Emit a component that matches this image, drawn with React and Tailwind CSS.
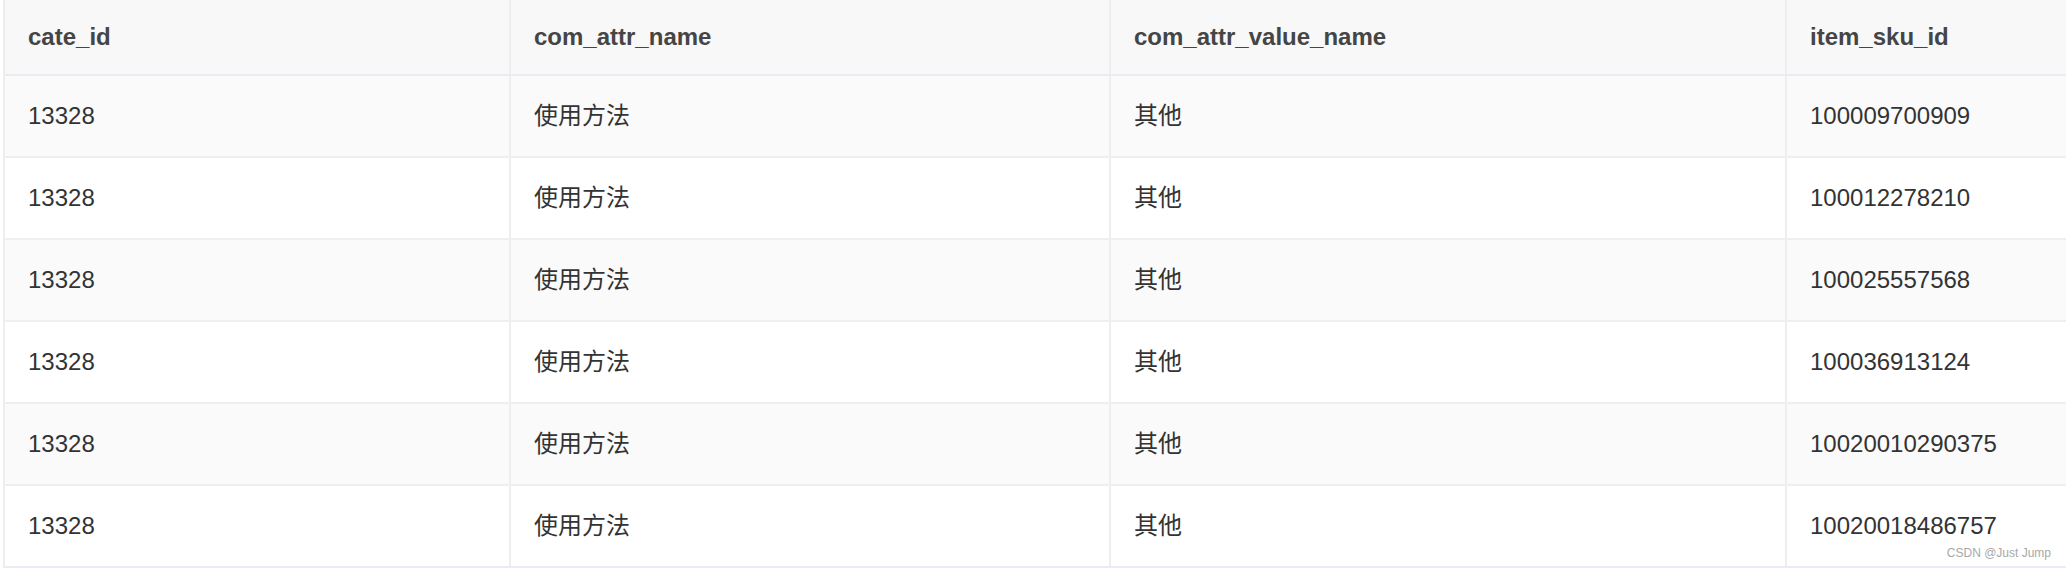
import React from 'react'

const columns = ['cate_id', 'com_attr_name', 'com_attr_value_name', 'item_sku_id']

const rows = [
  ['13328', '使用方法', '其他', '100009700909'],
  ['13328', '使用方法', '其他', '100012278210'],
  ['13328', '使用方法', '其他', '100025557568'],
  ['13328', '使用方法', '其他', '100036913124'],
  ['13328', '使用方法', '其他', '10020010290375'],
  ['13328', '使用方法', '其他', '10020018486757'],
]

const widths = ['w-[504px]', 'w-[600px] border-l-2 border-[#eeeeee]', 'w-[676px] border-l-2 border-[#eeeeee]', 'flex-1 border-l-2 border-[#eeeeee]']

const font = { fontFamily: '"Liberation Sans", "Noto Sans CJK SC", sans-serif' }

const App = () => {
  return (
    <div className="relative w-[2066px] h-[570px] overflow-hidden bg-white" style={font}>
      <div className="ml-[3px] w-[2300px] border-l-2 border-[#eeeeee]">
        <div className="flex h-[76px] bg-[#f8f8f8] border-b-2 border-[#e8ecf3]">
          {columns.map((c, i) => (
            <div key={c} className={`${widths[i]} flex items-center pl-[23px] text-[24px] font-bold text-[#454545]`}>
              {c}
            </div>
          ))}
        </div>
        {rows.map((r, ri) => (
          <div
            key={ri}
            className={`flex h-[82px] border-b-2 ${ri === rows.length - 1 ? 'border-[#e9edf3]' : 'border-[#efefef]'} ${ri % 2 === 0 ? 'bg-[#fafafa]' : 'bg-white'}`}
          >
            {r.map((v, i) => (
              <div key={i} className={`${widths[i]} flex items-center pl-[23px] text-[24px] text-[#333333]`}>
                {v}
              </div>
            ))}
          </div>
        ))}
      </div>
      <div className="absolute right-[15px] bottom-[8px] text-[12px] text-[#a8a8a8]">CSDN @Just Jump</div>
    </div>
  )
}

export default App
